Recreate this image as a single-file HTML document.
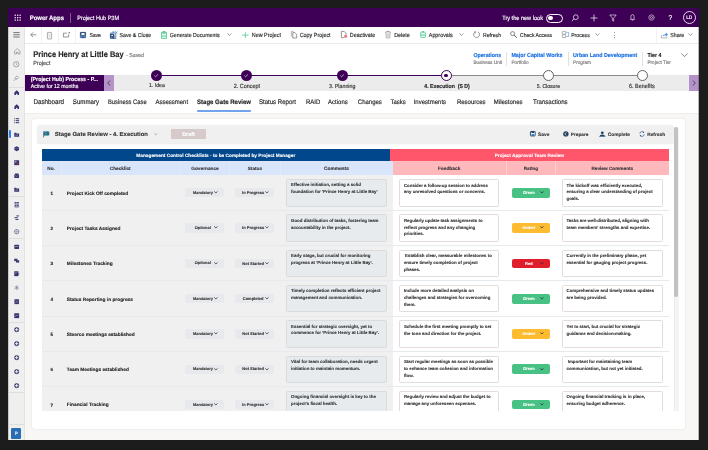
<!DOCTYPE html><html><head><meta charset="utf-8"><style>
html,body{margin:0;padding:0;}
body{filter:opacity(1);width:708px;height:450px;overflow:hidden;background:#1c1c1c;position:relative;font-family:"Liberation Sans",sans-serif;}
.r{position:absolute;box-sizing:border-box;}
svg.r{overflow:visible;}
.t{text-rendering:geometricPrecision;position:absolute;white-space:nowrap;transform-origin:0 0;}
</style></head><body>
<div class="r" style="left:8.00px;top:8.00px;width:691.00px;height:432.00px;background:#f8f7f6;"></div>
<div class="r" style="left:8.00px;top:8.00px;width:691.00px;height:19.00px;background:#3d0056;"></div>
<svg class="r" style="left:13.90px;top:14.10px;" width="7" height="7" viewBox="0 0 7 7"><rect x="0.60" y="0.60" width="1.25" height="1.25" fill="#fff"/><rect x="0.60" y="3.05" width="1.25" height="1.25" fill="#fff"/><rect x="0.60" y="5.50" width="1.25" height="1.25" fill="#fff"/><rect x="3.05" y="0.60" width="1.25" height="1.25" fill="#fff"/><rect x="3.05" y="3.05" width="1.25" height="1.25" fill="#fff"/><rect x="3.05" y="5.50" width="1.25" height="1.25" fill="#fff"/><rect x="5.50" y="0.60" width="1.25" height="1.25" fill="#fff"/><rect x="5.50" y="3.05" width="1.25" height="1.25" fill="#fff"/><rect x="5.50" y="5.50" width="1.25" height="1.25" fill="#fff"/></svg>
<div class="t" style="left:30px;top:15px;font-size:65.67px;line-height:65.67px;color:#fff;font-weight:bold;transform:translate(-0.300px,-0.159px) scale(0.09091,0.10000);-webkit-text-stroke:1.5px currentColor;">Power Apps</div>
<div class="r" style="left:70.30px;top:13.00px;width:0.50px;height:9.50px;background:rgba(255,255,255,0.35);"></div>
<div class="t" style="left:77px;top:15px;font-size:60.83px;line-height:60.83px;color:#fff;transform:translate(0.200px,0.251px) scale(0.09091,0.10000);-webkit-text-stroke:1.5px currentColor;">Project Hub P3M</div>
<div class="t" style="left:502px;top:15px;font-size:61.38px;line-height:61.38px;color:#fff;transform:translate(0.200px,0.004px) scale(0.09091,0.10000);-webkit-text-stroke:1.5px currentColor;">Try the new look</div>
<div class="r" style="left:546px;top:13.8px;width:16.8px;height:9.2px;border:0.8px solid #fff;border-radius:5px;"></div>
<div class="r" style="left:548.2px;top:15.6px;width:4.8px;height:4.8px;background:#fff;border-radius:50%;"></div>
<svg class="r" style="left:571.00px;top:13.50px;" width="8" height="8" viewBox="0 0 8 8"><circle cx="4.8" cy="3.2" r="2.4" fill="none" stroke="#fff" stroke-width="0.7"/><line x1="3.1" y1="4.9" x2="0.8" y2="7.2" stroke="#fff" stroke-width="0.7"/></svg>
<svg class="r" style="left:590.00px;top:13.50px;" width="8" height="8" viewBox="0 0 8 8"><line x1="4" y1="0.5" x2="4" y2="7.5" stroke="#fff" stroke-width="0.7"/><line x1="0.5" y1="4" x2="7.5" y2="4" stroke="#fff" stroke-width="0.7"/></svg>
<svg class="r" style="left:609.00px;top:13.50px;" width="8" height="8" viewBox="0 0 8 8"><path d="M0.8 1 L7.2 1 L4.6 4.2 L4.6 7.2 L3.4 6.4 L3.4 4.2 Z" fill="none" stroke="#fff" stroke-width="0.6"/></svg>
<svg class="r" style="left:629.50px;top:14.00px;" width="5" height="7" viewBox="0 0 5 7"><path d="M0.9 4.9 L0.9 2.6 Q0.9 0.6 2.5 0.6 Q4.1 0.6 4.1 2.6 L4.1 4.9 L4.6 5.4 L0.4 5.4 Z" fill="none" stroke="#fff" stroke-width="0.6"/><path d="M1.8 6.2 L3.2 6.2" stroke="#fff" stroke-width="0.6"/></svg>
<svg class="r" style="left:647.50px;top:14.00px;" width="7" height="7" viewBox="0 0 7 7"><circle cx="3.5" cy="3.5" r="2.6" fill="none" stroke="#fff" stroke-width="1.0" stroke-dasharray="0.9 0.45"/><circle cx="3.5" cy="3.5" r="1.0" fill="none" stroke="#fff" stroke-width="0.55"/></svg>
<div class="t" style="left:670px;top:14px;font-size:71.50px;line-height:71.50px;color:#fff;transform:translate(0.200px,0.248px) scale(0.09091,0.10000) translateX(-50%);-webkit-text-stroke:1.5px currentColor;">?</div>
<div class="r" style="left:682.5px;top:10.9px;width:13.2px;height:13.2px;border:0.6px solid rgba(255,255,255,0.85);border-radius:50%;"></div>
<div class="t" style="left:689px;top:15px;font-size:51.70px;line-height:51.70px;color:#fff;transform:translate(0.200px,0.124px) scale(0.09091,0.10000) translateX(-50%);-webkit-text-stroke:1.5px currentColor;">LD</div>
<div class="r" style="left:8.00px;top:27.00px;width:16.60px;height:413.00px;background:#efefef;"></div>
<div class="r" style="left:24.30px;top:27.00px;width:0.50px;height:413.00px;background:#e3e3e3;"></div>
<div class="r" style="left:8.00px;top:27.00px;width:0.80px;height:413.00px;background:#c9c9c9;"></div>
<div class="r" style="left:24.60px;top:27.00px;width:674.40px;height:16.00px;background:#ffffff;"></div>
<div class="r" style="left:24.60px;top:42.80px;width:674.40px;height:0.90px;background:#e9e9e9;"></div>
<div class="r" style="left:41.20px;top:27.00px;width:0.60px;height:15.60px;background:#f0f0f0;"></div>
<div class="r" style="left:58.20px;top:27.00px;width:0.60px;height:15.60px;background:#f0f0f0;"></div>
<div class="r" style="left:75.10px;top:27.00px;width:0.60px;height:15.60px;background:#f0f0f0;"></div>
<div class="r" style="left:656.20px;top:27.00px;width:1.20px;height:15.60px;background:#f2f2f2;"></div>
<div class="r" style="left:24.60px;top:43.70px;width:674.40px;height:30.90px;background:#ffffff;"></div>
<div class="r" style="left:24.60px;top:74.60px;width:674.40px;height:16.40px;background:#ececec;"></div>
<div class="r" style="left:24.60px;top:91.00px;width:674.40px;height:22.00px;background:#ffffff;"></div>
<svg class="r" style="left:30.00px;top:32.30px;" width="6.5" height="5.6" viewBox="0 0 6.5 5.6"><path d="M6.3 2.8 L0.7 2.8 M3.1 0.4 L0.7 2.8 L3.1 5.2" fill="none" stroke="#605e5c" stroke-width="0.65"/></svg>
<svg class="r" style="left:47.20px;top:31.50px;" width="5" height="7.4" viewBox="0 0 5 7.4"><rect x="0.4" y="0.4" width="4.2" height="6.6" rx="0.7" fill="#fafafa" stroke="#8a8886" stroke-width="0.7"/><rect x="1.6" y="1.6" width="1.8" height="3.8" fill="#e0e0e0"/></svg>
<svg class="r" style="left:63.00px;top:32.20px;" width="7" height="5.4" viewBox="0 0 7 5.4"><path d="M0.4 1.2 L0.4 5 L5.6 5 L5.6 2.4 M0.4 1.2 L4 1.2" fill="none" stroke="#605e5c" stroke-width="0.65"/><circle cx="6.2" cy="0.8" r="0.75" fill="#605e5c"/></svg>
<svg class="r" style="left:80.00px;top:31.80px;" width="6" height="6.1" viewBox="0 0 6 6.1"><rect x="0.35" y="0.35" width="5.3" height="5.3999999999999995" rx="0.4" fill="#4a8fd6" stroke="#34466a" stroke-width="0.7"/><rect x="0.35" y="0.35" width="5.3" height="3.05" fill="#34466a"/><rect x="1.4" y="1.1" width="3.2" height="1.8499999999999999" fill="#fff"/><rect x="2.2" y="4.3999999999999995" width="1.6" height="1.3" fill="#34466a"/></svg>
<div class="t" style="left:89px;top:32px;font-size:55.55px;line-height:55.55px;color:#2a2a2a;transform:translate(0.400px,0.498px) scale(0.09091,0.10000);-webkit-text-stroke:1.5px currentColor;">Save</div>
<svg class="r" style="left:109.50px;top:30.80px;" width="8" height="8" viewBox="0 0 8 8"><path d="M0.5 2 L4.8 2 L5.8 3 L5.8 7.5 L0.5 7.5 Z" fill="none" stroke="#2b579a" stroke-width="0.7"/><rect x="1.5" y="5" width="3" height="2.5" fill="#2b579a" opacity="0.6"/><path d="M5.3 0.4 L7.4 2.5 M7.4 0.4 L5.3 2.5" stroke="#2b579a" stroke-width="0.55"/></svg>
<svg class="r" style="left:110.00px;top:33.90px;" width="4.4" height="4.2" viewBox="0 0 4.4 4.2"><rect x="0.35" y="0.35" width="3.7" height="3.5" rx="0.4" fill="#4a8fd6" stroke="#34466a" stroke-width="0.7"/><rect x="0.35" y="0.35" width="3.7" height="2.1" fill="#34466a"/><rect x="1.4" y="1.1" width="1.6000000000000005" height="0.9000000000000001" fill="#fff"/><rect x="2.2" y="2.5" width="1.6" height="1.3" fill="#34466a"/></svg>
<svg class="r" style="left:110.80px;top:31.20px;" width="5.6" height="3.6" viewBox="0 0 5.6 3.6"><path d="M0.5 2.9 L2.6 0.8 M1.4 0.7 L2.7 0.7 L2.7 2" fill="none" stroke="#3b86d6" stroke-width="0.7"/><path d="M3.6 1.2 L5.2 1.2 L5.2 2.9" fill="none" stroke="#9a9a9a" stroke-width="0.55"/></svg>
<div class="t" style="left:120px;top:32px;font-size:57.53px;line-height:57.53px;color:#2a2a2a;transform:translate(-0.500px,0.330px) scale(0.09091,0.10000);-webkit-text-stroke:1.5px currentColor;">Save &amp; Close</div>
<svg class="r" style="left:160.50px;top:31.00px;" width="6" height="8" viewBox="0 0 6 8"><rect x="0.5" y="1.2" width="5" height="6.3" rx="0.4" fill="none" stroke="#3aa76d" stroke-width="0.7"/><rect x="1.8" y="0.4" width="2.4" height="1.4" fill="#3aa76d"/><path d="M1.7 4.5 L4.3 4.5 M3 3.2 L3 5.8" stroke="#3aa76d" stroke-width="0.5"/></svg>
<svg class="r" style="left:161.00px;top:31.60px;" width="6" height="6.8" viewBox="0 0 6 6.8"><rect x="0.55" y="1.15" width="4.9" height="5.3" rx="0.7" fill="#fff" stroke="#5fd19b" stroke-width="0.9"/><rect x="1.9" y="0.1" width="2.2" height="1.5" rx="0.4" fill="#5fd19b"/><rect x="1.5" y="2.7" width="0.9" height="2.7" fill="#5fd19b"/><rect x="3.6" y="2.7" width="0.9" height="2.7" fill="#5fd19b"/><rect x="1.5" y="3.65" width="3" height="0.8" fill="#5fd19b" opacity="0.7"/></svg>
<div class="t" style="left:170px;top:32px;font-size:57.53px;line-height:57.53px;color:#2a2a2a;transform:translate(-0.200px,0.330px) scale(0.09091,0.10000);-webkit-text-stroke:1.5px currentColor;">Generate Documents</div>
<svg class="r" style="left:227.30px;top:33.10px;" width="4.8" height="3.4" viewBox="0 0 4.8 3.4"><path d="M0.3 0.5 L2.4 2.4 L4.5 0.5" fill="none" stroke="#605e5c" stroke-width="0.6"/></svg>
<svg class="r" style="left:242.20px;top:31.80px;" width="6.8" height="6.2" viewBox="0 0 6.8 6.2"><path d="M3.4 0.2 L3.4 6 M0.2 3.1 L6.6 3.1" stroke="#5fd19b" stroke-width="0.9"/></svg>
<div class="t" style="left:252px;top:32px;font-size:59.84px;line-height:59.84px;color:#2a2a2a;transform:translate(-0.300px,0.135px) scale(0.09091,0.10000);-webkit-text-stroke:1.5px currentColor;">New Project</div>
<svg class="r" style="left:291.00px;top:31.00px;" width="6.2" height="7.4" viewBox="0 0 6.2 7.4"><path d="M0.4 5.6 L0.4 0.4 L2.6 0.4" fill="none" stroke="#8a8886" stroke-width="0.6"/><path d="M1.8 1.6 L3.9 1.6 L5.7 3.4 L5.7 7 L1.8 7 Z" fill="#fff" stroke="#605e5c" stroke-width="0.65"/></svg>
<div class="t" style="left:300px;top:32px;font-size:59.40px;line-height:59.40px;color:#2a2a2a;transform:translate(-0.300px,0.172px) scale(0.09091,0.10000);-webkit-text-stroke:1.5px currentColor;">Copy Project</div>
<svg class="r" style="left:340.80px;top:31.20px;" width="6.4" height="7" viewBox="0 0 6.4 7"><path d="M3.4 6.6 L0.4 6.6 L0.4 0.4 L3.2 0.4 L5 2.2 L5 3.8" fill="none" stroke="#605e5c" stroke-width="0.65"/><circle cx="4.7" cy="5.3" r="1.55" fill="#f0727f"/></svg>
<div class="t" style="left:350px;top:32px;font-size:59.40px;line-height:59.40px;color:#2a2a2a;transform:translate(-0.200px,0.172px) scale(0.09091,0.10000);-webkit-text-stroke:1.5px currentColor;">Deactivate</div>
<svg class="r" style="left:385.00px;top:31.10px;" width="6" height="7.2" viewBox="0 0 6 7.2"><path d="M0.3 1.2 L5.7 1.2" stroke="#605e5c" stroke-width="0.7"/><path d="M2.2 1.2 L2.2 0.3 L3.8 0.3 L3.8 1.2" fill="none" stroke="#605e5c" stroke-width="0.5"/><path d="M0.9 1.2 L1.2 6.9 L4.8 6.9 L5.1 1.2" fill="#f3f3f3" stroke="#8a8886" stroke-width="0.6"/><path d="M2.3 2.6 L2.3 5.6 M3.7 2.6 L3.7 5.6" stroke="#9a9a9a" stroke-width="0.45"/></svg>
<div class="t" style="left:394px;top:32px;font-size:58.96px;line-height:58.96px;color:#2a2a2a;transform:translate(0.200px,0.209px) scale(0.09091,0.10000);-webkit-text-stroke:1.5px currentColor;">Delete</div>
<svg class="r" style="left:419.80px;top:31.40px;" width="6" height="6.8" viewBox="0 0 6 6.8"><rect x="0.55" y="1.15" width="4.9" height="5.3" rx="0.7" fill="#fff" stroke="#5fd19b" stroke-width="0.9"/><rect x="1.9" y="0.1" width="2.2" height="1.5" rx="0.4" fill="#5fd19b"/><rect x="1.5" y="2.7" width="0.9" height="2.7" fill="#5fd19b"/><rect x="3.6" y="2.7" width="0.9" height="2.7" fill="#5fd19b"/><rect x="1.5" y="3.65" width="3" height="0.8" fill="#5fd19b" opacity="0.7"/></svg>
<div class="t" style="left:429px;top:32px;font-size:59.07px;line-height:59.07px;color:#2a2a2a;transform:translate(-0.200px,0.200px) scale(0.09091,0.10000);-webkit-text-stroke:1.5px currentColor;">Approvals</div>
<svg class="r" style="left:458.80px;top:33.10px;" width="4.8" height="3.4" viewBox="0 0 4.8 3.4"><path d="M0.3 0.5 L2.4 2.4 L4.5 0.5" fill="none" stroke="#605e5c" stroke-width="0.6"/></svg>
<svg class="r" style="left:473.20px;top:31.40px;" width="7.2" height="6.8" viewBox="0 0 7.2 6.8"><path d="M2.4 0.9 A2.95 2.95 0 1 0 4.8 0.9" fill="none" stroke="#605e5c" stroke-width="0.65"/><path d="M1.2 0.5 L2.6 0.9 L2.2 2.2" fill="none" stroke="#605e5c" stroke-width="0.55"/></svg>
<div class="t" style="left:483px;top:32px;font-size:56.54px;line-height:56.54px;color:#2a2a2a;transform:translate(0.000px,0.414px) scale(0.09091,0.10000);-webkit-text-stroke:1.5px currentColor;">Refresh</div>
<svg class="r" style="left:510.20px;top:30.90px;" width="7.4" height="7.5" viewBox="0 0 7.4 7.5"><circle cx="2.6" cy="2.6" r="2.0" fill="none" stroke="#605e5c" stroke-width="0.75"/><path d="M4 4 L6.9 6.9" stroke="#605e5c" stroke-width="0.9"/></svg>
<div class="t" style="left:520px;top:32px;font-size:56.10px;line-height:56.10px;color:#2a2a2a;transform:translate(0.000px,0.451px) scale(0.09091,0.10000);-webkit-text-stroke:1.5px currentColor;">Check Access</div>
<svg class="r" style="left:562.00px;top:31.10px;" width="7.2" height="6.9" viewBox="0 0 7.2 6.9"><rect x="0.35" y="0.35" width="3.4" height="2.9" rx="0.5" fill="none" stroke="#8a8886" stroke-width="0.65"/><rect x="0.35" y="3.65" width="3.4" height="2.9" rx="0.5" fill="none" stroke="#8a8886" stroke-width="0.65"/><path d="M4.3 1.3 L6.6 1.3 L6.6 5.6 L4.3 5.6" fill="none" stroke="#5b9be6" stroke-width="0.7"/></svg>
<div class="t" style="left:571px;top:32px;font-size:56.32px;line-height:56.32px;color:#2a2a2a;transform:translate(0.200px,0.433px) scale(0.09091,0.10000);-webkit-text-stroke:1.5px currentColor;">Process</div>
<svg class="r" style="left:595.40px;top:33.10px;" width="4.8" height="3.4" viewBox="0 0 4.8 3.4"><path d="M0.3 0.5 L2.4 2.4 L4.5 0.5" fill="none" stroke="#605e5c" stroke-width="0.6"/></svg>
<div class="r" style="left:613.90px;top:32.40px;width:0.90px;height:0.90px;background:#605e5c;border-radius:50%;"></div>
<div class="r" style="left:613.90px;top:34.60px;width:0.90px;height:0.90px;background:#605e5c;border-radius:50%;"></div>
<div class="r" style="left:613.90px;top:36.80px;width:0.90px;height:0.90px;background:#605e5c;border-radius:50%;"></div>
<svg class="r" style="left:661.00px;top:31.60px;" width="7.2" height="6.4" viewBox="0 0 7.2 6.4"><path d="M0.4 3 L0.4 5.9 L6 5.9 L6 4.6" fill="none" stroke="#8a8886" stroke-width="0.6"/><path d="M1.6 4.6 Q2 2.2 4.8 2.2 L4.8 0.6 L7 2.6 L4.8 4.6 L4.8 3.2 Q3 3.2 1.6 4.6 Z" fill="#3b86e6"/></svg>
<div class="t" style="left:670px;top:32px;font-size:58.08px;line-height:58.08px;color:#2a2a2a;transform:translate(0.200px,0.284px) scale(0.09091,0.10000);-webkit-text-stroke:1.5px currentColor;">Share</div>
<svg class="r" style="left:687.60px;top:33.10px;" width="4.8" height="3.4" viewBox="0 0 4.8 3.4"><path d="M0.3 0.5 L2.4 2.4 L4.5 0.5" fill="none" stroke="#605e5c" stroke-width="0.6"/></svg>
<div class="t" style="left:33px;top:50px;font-size:81.95px;line-height:81.95px;color:#242424;font-weight:bold;transform:translate(0.300px,0.263px) scale(0.09091,0.10000);-webkit-text-stroke:1.5px currentColor;">Prince Henry at Little Bay</div>
<div class="t" style="left:126px;top:52px;font-size:56.76px;line-height:56.76px;color:#707070;transform:translate(0.200px,0.195px) scale(0.09091,0.10000);-webkit-text-stroke:1.5px currentColor;">- Saved</div>
<div class="t" style="left:33px;top:60px;font-size:60.06px;line-height:60.06px;color:#424242;transform:translate(0.300px,0.216px) scale(0.09091,0.10000);-webkit-text-stroke:1.5px currentColor;">Project</div>
<div class="t" style="left:473px;top:52px;font-size:57.75px;line-height:57.75px;color:#1a6fe0;font-weight:bold;transform:translate(0.400px,0.011px) scale(0.09091,0.10000);-webkit-text-stroke:1.5px currentColor;">Operations</div>
<div class="t" style="left:473px;top:59px;font-size:51.70px;line-height:51.70px;color:#777;transform:translate(0.400px,0.424px) scale(0.09091,0.10000);-webkit-text-stroke:1.5px currentColor;">Business Unit</div>
<div class="r" style="left:506.30px;top:52.00px;width:0.50px;height:13.80px;background:#e1e1e1;"></div>
<div class="t" style="left:511px;top:52px;font-size:58.52px;line-height:58.52px;color:#1a6fe0;font-weight:bold;transform:translate(0.400px,-0.054px) scale(0.09091,0.10000);-webkit-text-stroke:1.5px currentColor;">Major Capital Works</div>
<div class="t" style="left:511px;top:59px;font-size:51.70px;line-height:51.70px;color:#777;transform:translate(0.400px,0.424px) scale(0.09091,0.10000);-webkit-text-stroke:1.5px currentColor;">Portfolio</div>
<div class="r" style="left:567.60px;top:52.00px;width:0.50px;height:13.80px;background:#e1e1e1;"></div>
<div class="t" style="left:573px;top:52px;font-size:58.30px;line-height:58.30px;color:#1a6fe0;font-weight:bold;transform:translate(0.000px,-0.035px) scale(0.09091,0.10000);-webkit-text-stroke:1.5px currentColor;">Urban Land Development</div>
<div class="t" style="left:573px;top:59px;font-size:51.70px;line-height:51.70px;color:#777;transform:translate(0.000px,0.424px) scale(0.09091,0.10000);-webkit-text-stroke:1.5px currentColor;">Program</div>
<div class="r" style="left:642.10px;top:52.00px;width:0.50px;height:13.80px;background:#e1e1e1;"></div>
<div class="t" style="left:648px;top:52px;font-size:57.31px;line-height:57.31px;color:#242424;font-weight:bold;transform:translate(-0.500px,0.049px) scale(0.09091,0.10000);-webkit-text-stroke:1.5px currentColor;">Tier 4</div>
<div class="t" style="left:648px;top:60px;font-size:50.71px;line-height:50.71px;color:#777;transform:translate(-0.500px,-0.493px) scale(0.09091,0.10000);-webkit-text-stroke:1.5px currentColor;">Project Tier</div>
<svg class="r" style="left:680.70px;top:52.75px;" width="7" height="4.5" viewBox="0 0 7 4.5"><path d="M0.3 0.5 L3.5 3.5 L6.7 0.5" fill="none" stroke="#424242" stroke-width="0.6"/></svg>
<div class="r" style="left:25.00px;top:74.60px;width:79.30px;height:16.40px;background:#3d0056;"></div>
<div class="r" style="left:104.30px;top:74.60px;width:9.50px;height:16.40px;background:#b592c9;"></div>
<svg class="r" style="left:106.80px;top:79.80px;" width="4" height="6" viewBox="0 0 4 6"><path d="M3 0.5 L0.8 3 L3 5.5" fill="none" stroke="#333" stroke-width="0.8"/></svg>
<div class="t" style="left:31px;top:76px;font-size:58.19px;line-height:58.19px;color:#fff;font-weight:bold;transform:translate(-0.200px,-0.126px) scale(0.09091,0.10000);-webkit-text-stroke:1.5px currentColor;">(Project Hub) Process - P...</div>
<div class="t" style="left:31px;top:83px;font-size:57.31px;line-height:57.31px;color:#fff;transform:translate(-0.200px,0.149px) scale(0.09091,0.10000);-webkit-text-stroke:1.5px currentColor;">Active for 12 months</div>
<div class="r" style="left:689.20px;top:75.00px;width:9.80px;height:16.00px;background:#b592c9;"></div>
<svg class="r" style="left:692.20px;top:79.80px;" width="4" height="6" viewBox="0 0 4 6"><path d="M1 0.5 L3.2 3 L1 5.5" fill="none" stroke="#333" stroke-width="0.8"/></svg>
<div class="r" style="left:156.50px;top:74.90px;width:289.60px;height:1.10px;background:#3d0056;"></div>
<div class="r" style="left:446.10px;top:75.00px;width:195.90px;height:0.90px;background:#8a8886;"></div>
<div class="r" style="left:150.95px;top:69.9px;width:11.1px;height:11.1px;border-radius:50%;background:#3d0056;"></div>
<svg class="r" style="left:154.30px;top:73.80px;" width="4.4" height="3.2" viewBox="0 0 4.4 3.2"><path d="M0.4 1.6 L1.6 2.7 L4 0.4" fill="none" stroke="#fff" stroke-width="0.6"/></svg>
<div class="r" style="left:240.85px;top:69.9px;width:11.1px;height:11.1px;border-radius:50%;background:#3d0056;"></div>
<svg class="r" style="left:244.20px;top:73.80px;" width="4.4" height="3.2" viewBox="0 0 4.4 3.2"><path d="M0.4 1.6 L1.6 2.7 L4 0.4" fill="none" stroke="#fff" stroke-width="0.6"/></svg>
<div class="r" style="left:336.85px;top:69.9px;width:11.1px;height:11.1px;border-radius:50%;background:#3d0056;"></div>
<svg class="r" style="left:340.20px;top:73.80px;" width="4.4" height="3.2" viewBox="0 0 4.4 3.2"><path d="M0.4 1.6 L1.6 2.7 L4 0.4" fill="none" stroke="#fff" stroke-width="0.6"/></svg>
<div class="r" style="left:440.80px;top:70.15px;width:11px;height:11px;border-radius:50%;background:#fff;border:1.35px solid #3d0056;"></div>
<div class="r" style="left:444.20px;top:73.55px;width:3.8px;height:3.8px;border-radius:50%;background:#3d0056;"></div>
<div class="r" style="left:543.10px;top:70.05px;width:11px;height:11px;border-radius:50%;background:#fff;border:1.35px solid #636261;"></div>
<div class="r" style="left:636.60px;top:70.05px;width:11px;height:11px;border-radius:50%;background:#fff;border:1.35px solid #636261;"></div>
<div class="t" style="left:149px;top:83px;font-size:56.87px;line-height:56.87px;color:#323130;transform:translate(0.000px,-0.114px) scale(0.09091,0.10000);-webkit-text-stroke:1.5px currentColor;">1. Idea</div>
<div class="t" style="left:234px;top:83px;font-size:59.84px;line-height:59.84px;color:#323130;transform:translate(-0.300px,-0.365px) scale(0.09091,0.10000);-webkit-text-stroke:1.5px currentColor;">2. Concept</div>
<div class="t" style="left:329px;top:83px;font-size:57.86px;line-height:57.86px;color:#323130;transform:translate(0.000px,-0.198px) scale(0.09091,0.10000);-webkit-text-stroke:1.5px currentColor;">3. Planning</div>
<div class="t" style="left:424px;top:83px;font-size:56.98px;line-height:56.98px;color:#242424;font-weight:bold;transform:translate(0.300px,-0.123px) scale(0.09091,0.10000);-webkit-text-stroke:1.5px currentColor;">4. Execution&nbsp; (S D)</div>
<div class="t" style="left:537px;top:83px;font-size:56.21px;line-height:56.21px;color:#323130;transform:translate(-0.300px,-0.058px) scale(0.09091,0.10000);-webkit-text-stroke:1.5px currentColor;">5. Closure</div>
<div class="t" style="left:629px;top:83px;font-size:59.84px;line-height:59.84px;color:#323130;transform:translate(0.000px,-0.365px) scale(0.09091,0.10000);-webkit-text-stroke:1.5px currentColor;">6. Benefits</div>
<div class="t" style="left:34px;top:98px;font-size:68.75px;line-height:68.75px;color:#222222;transform:translate(-0.500px,0.480px) scale(0.09091,0.10000);-webkit-text-stroke:1.5px currentColor;">Dashboard</div>
<div class="t" style="left:73px;top:99px;font-size:67.65px;line-height:67.65px;color:#222222;transform:translate(-0.200px,-0.427px) scale(0.09091,0.10000);-webkit-text-stroke:1.5px currentColor;">Summary</div>
<div class="t" style="left:108px;top:99px;font-size:63.69px;line-height:63.69px;color:#222222;transform:translate(0.000px,-0.091px) scale(0.09091,0.10000);-webkit-text-stroke:1.5px currentColor;">Business Case</div>
<div class="t" style="left:156px;top:99px;font-size:65.89px;line-height:65.89px;color:#222222;transform:translate(-0.500px,-0.278px) scale(0.09091,0.10000);-webkit-text-stroke:1.5px currentColor;">Assessment</div>
<div class="t" style="left:259px;top:99px;font-size:66.88px;line-height:66.88px;color:#222222;transform:translate(-0.100px,-0.361px) scale(0.09091,0.10000);-webkit-text-stroke:1.5px currentColor;">Status Report</div>
<div class="t" style="left:306px;top:99px;font-size:66.00px;line-height:66.00px;color:#222222;transform:translate(0.000px,-0.287px) scale(0.09091,0.10000);-webkit-text-stroke:1.5px currentColor;">RAID</div>
<div class="t" style="left:328px;top:99px;font-size:66.00px;line-height:66.00px;color:#222222;transform:translate(0.100px,-0.287px) scale(0.09091,0.10000);-webkit-text-stroke:1.5px currentColor;">Actions</div>
<div class="t" style="left:358px;top:99px;font-size:66.00px;line-height:66.00px;color:#222222;transform:translate(-0.200px,-0.287px) scale(0.09091,0.10000);-webkit-text-stroke:1.5px currentColor;">Changes</div>
<div class="t" style="left:390px;top:99px;font-size:66.00px;line-height:66.00px;color:#222222;transform:translate(0.400px,-0.287px) scale(0.09091,0.10000);-webkit-text-stroke:1.5px currentColor;">Tasks</div>
<div class="t" style="left:414px;top:99px;font-size:66.00px;line-height:66.00px;color:#222222;transform:translate(-0.300px,-0.287px) scale(0.09091,0.10000);-webkit-text-stroke:1.5px currentColor;">Investments</div>
<div class="t" style="left:457px;top:99px;font-size:66.00px;line-height:66.00px;color:#222222;transform:translate(-0.100px,-0.287px) scale(0.09091,0.10000);-webkit-text-stroke:1.5px currentColor;">Resources</div>
<div class="t" style="left:494px;top:99px;font-size:66.00px;line-height:66.00px;color:#222222;transform:translate(-0.200px,-0.287px) scale(0.09091,0.10000);-webkit-text-stroke:1.5px currentColor;">Milestones</div>
<div class="t" style="left:533px;top:99px;font-size:66.88px;line-height:66.88px;color:#222222;transform:translate(0.000px,-0.361px) scale(0.09091,0.10000);-webkit-text-stroke:1.5px currentColor;">Transactions</div>
<div class="t" style="left:197px;top:99px;font-size:66.33px;line-height:66.33px;color:#242424;font-weight:bold;transform:translate(0.000px,-0.315px) scale(0.09091,0.10000);-webkit-text-stroke:1.5px currentColor;">Stage Gate Review</div>
<div class="r" style="left:197.00px;top:110.30px;width:54.00px;height:1.50px;background:#74a3ee;border-radius:0.7px;"></div>
<div class="r" style="left:24.60px;top:112.80px;width:674.40px;height:0.60px;background:#ededed;"></div>
<div class="r" style="left:698.20px;top:27.00px;width:0.80px;height:413.00px;background:rgba(60,60,60,0.35);"></div>
<div class="r" style="left:31.6px;top:118.7px;width:653.6px;height:310.3px;background:#fff;border-radius:2px;box-shadow:0 0 1.5px rgba(0,0,0,0.18);"></div>
<div class="r" style="left:38.1px;top:125.2px;width:634.5px;height:17.5px;background:#f0f0f0;box-shadow:0 1.2px 2.2px rgba(0,0,0,0.16);"></div>
<svg class="r" style="left:43.00px;top:131.00px;" width="6.4" height="6.4" viewBox="0 0 6.4 6.4"><path d="M0.6 0.3 L0.6 6.3" stroke="#4a6a9a" stroke-width="0.9"/><rect x="1" y="0.5" width="5.2" height="3.9" fill="#2a5aa8"/><rect x="1" y="0.5" width="1.3" height="1.3" fill="#5a8fd8"/><rect x="2.3" y="1.8" width="1.3" height="1.3" fill="#1e8a50"/><rect x="3.6" y="0.5" width="1.3" height="1.3" fill="#1e8a50"/><rect x="4.9" y="1.8" width="1.3" height="1.3" fill="#1e8a50"/><rect x="1" y="3.1" width="1.3" height="1.3" fill="#1e8a50"/><rect x="3.6" y="3.1" width="1.3" height="1.3" fill="#1e8a50"/><rect x="2.3" y="1.9" width="1.2" height="1.0" fill="#9cc0f0" opacity="0.7"/></svg>
<div class="t" style="left:55px;top:131px;font-size:59.30px;line-height:59.30px;color:#333;font-weight:bold;transform:translate(-0.300px,0.280px) scale(0.10000,0.10000);-webkit-text-stroke:1.0px currentColor;">Stage Gate Review - 4. Execution</div>
<svg class="r" style="left:154.00px;top:132.80px;" width="3.6" height="2.8" viewBox="0 0 3.6 2.8"><path d="M0.3 0.5 L1.8 1.8 L3.3000000000000003 0.5" fill="none" stroke="#777" stroke-width="0.5"/></svg>
<div class="r" style="left:171.1px;top:129px;width:35px;height:10px;background:#d6caca;"></div>
<div class="t" style="left:188px;top:132px;font-size:54.00px;line-height:54.00px;color:#fff;font-weight:bold;transform:translate(0.500px,-0.471px) scale(0.10000,0.10000) translateX(-50%);-webkit-text-stroke:1.0px currentColor;">Draft</div>
<svg class="r" style="left:530.30px;top:131.10px;" width="5.6" height="5.4" viewBox="0 0 5.6 5.4"><rect x="0.45" y="0.45" width="4.7" height="4.5" rx="0.4" fill="#fff" stroke="#1d3f66" stroke-width="0.9"/><rect x="1.4" y="0.45" width="2.8" height="1.6" fill="#1d3f66"/><rect x="1.5" y="3.1" width="2.6" height="1.8" fill="#2f6fc0"/></svg>
<div class="t" style="left:538px;top:132px;font-size:48.80px;line-height:48.80px;color:#333;font-weight:bold;transform:translate(0.000px,-0.331px) scale(0.10000,0.10000);-webkit-text-stroke:1.0px currentColor;">Save</div>
<svg class="r" style="left:562.80px;top:131.40px;" width="5.8" height="5.8" viewBox="0 0 5.8 5.8"><circle cx="2.9" cy="2.9" r="2.7" fill="#24435f"/><path d="M3.3 1.4 L1.9 2.9 L3.3 4.4" fill="none" stroke="#fff" stroke-width="0.7"/></svg>
<div class="t" style="left:571px;top:132px;font-size:47.50px;line-height:47.50px;color:#333;font-weight:bold;transform:translate(-0.200px,-0.221px) scale(0.10000,0.10000);-webkit-text-stroke:1.0px currentColor;">Prepare</div>
<svg class="r" style="left:599.00px;top:131.30px;" width="6.6" height="6" viewBox="0 0 6.6 6"><circle cx="3.3" cy="1.8" r="1.4" fill="#24435f"/><path d="M0.4 5.6 Q0.6 3.4 3.3 3.4 Q6 3.4 6.2 5.6 Z" fill="#24435f"/><rect x="0.2" y="5.1" width="6.2" height="0.7" fill="#4a7aa8"/></svg>
<div class="t" style="left:608px;top:132px;font-size:48.90px;line-height:48.90px;color:#333;font-weight:bold;transform:translate(-0.300px,-0.339px) scale(0.10000,0.10000);-webkit-text-stroke:1.0px currentColor;">Complete</div>
<svg class="r" style="left:639.00px;top:131.20px;" width="6" height="6" viewBox="0 0 6 6"><path d="M5 1.6 A2.3 2.3 0 0 0 0.8 2.6 M1 4.4 A2.3 2.3 0 0 0 5.2 3.4" fill="none" stroke="#2d5d94" stroke-width="0.75"/><path d="M4.4 0.4 L5.4 1.9 L3.8 2.1 Z M1.6 5.6 L0.6 4.1 L2.2 3.9 Z" fill="#2d5d94"/></svg>
<div class="t" style="left:647px;top:132px;font-size:48.10px;line-height:48.10px;color:#333;font-weight:bold;transform:translate(0.200px,-0.272px) scale(0.10000,0.10000);-webkit-text-stroke:1.0px currentColor;">Refresh</div>
<div class="r" style="left:673.60px;top:126.60px;width:5.00px;height:284.10px;background:#f4f4f4;border-left:0.4px solid #ececec;"></div>
<div class="r" style="left:674.40px;top:126.60px;width:3.60px;height:170.10px;background:#c2c2c2;border-radius:1.8px;"></div>
<div class="r" style="left:41.90px;top:149.20px;width:347.80px;height:12.20px;background:#00478c;"></div>
<div class="r" style="left:389.70px;top:149.20px;width:279.00px;height:12.10px;background:#ff566b;"></div>
<div class="r" style="left:41.90px;top:161.40px;width:350.90px;height:13.60px;background:#d9e5fb;"></div>
<div class="r" style="left:392.80px;top:161.30px;width:275.90px;height:13.70px;background:#ffb8bc;"></div>
<div class="r" style="left:61.10px;top:161.40px;width:0.60px;height:13.60px;background:rgba(255,255,255,0.2);"></div>
<div class="r" style="left:179.30px;top:161.40px;width:0.60px;height:13.60px;background:rgba(255,255,255,0.2);"></div>
<div class="r" style="left:228.90px;top:161.40px;width:0.60px;height:13.60px;background:rgba(255,255,255,0.2);"></div>
<div class="r" style="left:280.20px;top:161.40px;width:0.60px;height:13.60px;background:rgba(255,255,255,0.2);"></div>
<div class="r" style="left:505.50px;top:161.30px;width:0.60px;height:13.70px;background:rgba(255,255,255,0.35);"></div>
<div class="r" style="left:555.30px;top:161.30px;width:0.60px;height:13.70px;background:rgba(255,255,255,0.35);"></div>
<div class="t" style="left:216px;top:153px;font-size:47.50px;line-height:47.50px;color:#fff;font-weight:bold;transform:translate(-0.200px,0.079px) scale(0.10000,0.10000) translateX(-50%);-webkit-text-stroke:1.0px currentColor;">Management Control Checklists - to be Completed by Project Manager</div>
<div class="t" style="left:529px;top:153px;font-size:47.80px;line-height:47.80px;color:#fff;font-weight:bold;transform:translate(0.300px,0.054px) scale(0.10000,0.10000) translateX(-50%);-webkit-text-stroke:1.0px currentColor;">Project Approval Team Review</div>
<div class="t" style="left:47px;top:166px;font-size:46.60px;line-height:46.60px;color:#333;font-weight:bold;transform:translate(0.300px,0.055px) scale(0.10000,0.10000);-webkit-text-stroke:1.0px currentColor;">No.</div>
<div class="t" style="left:120px;top:166px;font-size:47.00px;line-height:47.00px;color:#333;font-weight:bold;transform:translate(0.200px,0.021px) scale(0.10000,0.10000) translateX(-50%);-webkit-text-stroke:1.0px currentColor;">Checklist</div>
<div class="t" style="left:205px;top:166px;font-size:47.60px;line-height:47.60px;color:#333;font-weight:bold;transform:translate(0.000px,-0.029px) scale(0.10000,0.10000) translateX(-50%);-webkit-text-stroke:1.0px currentColor;">Governance</div>
<div class="t" style="left:255px;top:166px;font-size:47.10px;line-height:47.10px;color:#333;font-weight:bold;transform:translate(-0.100px,0.013px) scale(0.10000,0.10000) translateX(-50%);-webkit-text-stroke:1.0px currentColor;">Status</div>
<div class="t" style="left:336px;top:166px;font-size:48.00px;line-height:48.00px;color:#333;font-weight:bold;transform:translate(0.400px,-0.063px) scale(0.10000,0.10000) translateX(-50%);-webkit-text-stroke:1.0px currentColor;">Comments</div>
<div class="t" style="left:449px;top:166px;font-size:48.30px;line-height:48.30px;color:#333;font-weight:bold;transform:translate(0.200px,-0.089px) scale(0.10000,0.10000) translateX(-50%);-webkit-text-stroke:1.0px currentColor;">Feedback</div>
<div class="t" style="left:531px;top:166px;font-size:45.60px;line-height:45.60px;color:#333;font-weight:bold;transform:translate(-0.100px,0.140px) scale(0.10000,0.10000) translateX(-50%);-webkit-text-stroke:1.0px currentColor;">Rating</div>
<div class="t" style="left:612px;top:166px;font-size:47.00px;line-height:47.00px;color:#333;font-weight:bold;transform:translate(0.300px,0.021px) scale(0.10000,0.10000) translateX(-50%);-webkit-text-stroke:1.0px currentColor;">Review Comments</div>
<div class="r" style="left:0;top:175px;width:708px;height:235.6px;overflow:hidden;">
<div class="r" style="left:41.90px;top:0.00px;width:350.90px;height:240.00px;background:#f0f0f0;"></div>
<div class="r" style="left:41.90px;top:34.85px;width:626.80px;height:0.80px;background:#e6eaee;"></div>
<div class="r" style="left:41.90px;top:70.15px;width:626.80px;height:0.80px;background:#e6eaee;"></div>
<div class="r" style="left:41.90px;top:105.45px;width:626.80px;height:0.80px;background:#e6eaee;"></div>
<div class="r" style="left:41.90px;top:140.75px;width:626.80px;height:0.80px;background:#e6eaee;"></div>
<div class="r" style="left:41.90px;top:176.05px;width:626.80px;height:0.80px;background:#e6eaee;"></div>
<div class="r" style="left:41.90px;top:211.35px;width:626.80px;height:0.80px;background:#e6eaee;"></div>
<div class="r" style="left:41.90px;top:246.65px;width:626.80px;height:0.80px;background:#e6eaee;"></div>
<div class="t" style="left:50px;top:16px;font-size:46.00px;line-height:46.00px;color:#222;font-weight:bold;transform:translate(0.400px,-0.094px) scale(0.10000,0.10000);-webkit-text-stroke:1.0px currentColor;">1</div>
<div class="t" style="left:67px;top:16px;font-size:48.00px;line-height:48.00px;color:#222;font-weight:bold;transform:translate(-0.200px,-0.263px) scale(0.10000,0.10000);-webkit-text-stroke:1.0px currentColor;">Project Kick Off completed</div>
<div class="r" style="left:185.3px;top:13.10px;width:38.7px;height:9.3px;background:#e7e9ec;border-radius:2px;"></div>
<div class="t" style="left:203px;top:16px;font-size:39.60px;line-height:39.60px;color:#333;font-weight:bold;transform:translate(0.000px,-0.352px) scale(0.10000,0.10000) translateX(-50%);-webkit-text-stroke:1.0px currentColor;">Mandatory</div>
<svg class="r" style="left:214.10px;top:16.05px;" width="3.8" height="2.9" viewBox="0 0 3.8 2.9"><path d="M0.3 0.5 L1.9 1.9 L3.5 0.5" fill="none" stroke="#333" stroke-width="0.8"/></svg>
<div class="r" style="left:235.3px;top:13.10px;width:39px;height:9.3px;background:#e7e9ec;border-radius:2px;"></div>
<div class="t" style="left:253px;top:16px;font-size:40.00px;line-height:40.00px;color:#333;font-weight:bold;transform:translate(0.100px,-0.386px) scale(0.10000,0.10000) translateX(-50%);-webkit-text-stroke:1.0px currentColor;">In Progress</div>
<svg class="r" style="left:264.50px;top:16.05px;" width="3.8" height="2.9" viewBox="0 0 3.8 2.9"><path d="M0.3 0.5 L1.9 1.9 L3.5 0.5" fill="none" stroke="#333" stroke-width="0.8"/></svg>
<div class="r" style="left:286.4px;top:4.00px;width:100.3px;height:27.5px;background:#e8ebee;border:0.5px solid #d9dcdf;border-radius:1.5px;"></div>
<div class="t" style="left:291px;top:8px;font-size:44.00px;line-height:44.00px;color:#333;font-weight:bold;transform:translate(0.000px,-0.125px) scale(0.10000,0.10000);-webkit-text-stroke:1.0px currentColor;">Effective initiation, setting a solid</div>
<div class="t" style="left:291px;top:15px;font-size:44.00px;line-height:44.00px;color:#333;font-weight:bold;transform:translate(0.000px,-0.325px) scale(0.10000,0.10000);-webkit-text-stroke:1.0px currentColor;">foundation for 'Prince Henry at Little Bay'</div>
<div class="r" style="left:398.8px;top:4.00px;width:100.5px;height:27.5px;background:#fff;border:0.5px solid #e2dcdc;border-radius:1.5px;"></div>
<div class="t" style="left:404px;top:8px;font-size:43.70px;line-height:43.70px;color:#333;font-weight:bold;transform:translate(-0.100px,-0.099px) scale(0.10000,0.10000);-webkit-text-stroke:1.0px currentColor;">Consider a follow-up session to address</div>
<div class="t" style="left:404px;top:15px;font-size:43.70px;line-height:43.70px;color:#333;font-weight:bold;transform:translate(-0.100px,-0.299px) scale(0.10000,0.10000);-webkit-text-stroke:1.0px currentColor;">any unresolved questions or concerns.</div>
<div class="r" style="left:511.5px;top:12.90px;width:38.5px;height:9.8px;background:#48c284;border-radius:2px;"></div>
<div class="t" style="left:529px;top:16px;font-size:40.80px;line-height:40.80px;color:#fff;font-weight:bold;transform:translate(-0.200px,-0.454px) scale(0.10000,0.10000) translateX(-50%);-webkit-text-stroke:1.0px currentColor;">Green</div>
<svg class="r" style="left:540.30px;top:16.05px;" width="3.8" height="2.9" viewBox="0 0 3.8 2.9"><path d="M0.3 0.5 L1.9 1.9 L3.5 0.5" fill="none" stroke="#2a2a40" stroke-width="0.8"/></svg>
<div class="r" style="left:561.9px;top:4.00px;width:100.8px;height:27.5px;background:#fff;border:0.5px solid #e2dcdc;border-radius:1.5px;"></div>
<div class="t" style="left:566px;top:8px;font-size:43.70px;line-height:43.70px;color:#333;font-weight:bold;transform:translate(0.500px,-0.099px) scale(0.10000,0.10000);-webkit-text-stroke:1.0px currentColor;">The kickoff was efficiently executed,</div>
<div class="t" style="left:566px;top:15px;font-size:43.70px;line-height:43.70px;color:#333;font-weight:bold;transform:translate(0.500px,-0.299px) scale(0.10000,0.10000);-webkit-text-stroke:1.0px currentColor;">ensuring a clear understanding of project</div>
<div class="t" style="left:566px;top:22px;font-size:43.70px;line-height:43.70px;color:#333;font-weight:bold;transform:translate(0.500px,-0.499px) scale(0.10000,0.10000);-webkit-text-stroke:1.0px currentColor;">goals.</div>
<div class="t" style="left:50px;top:51px;font-size:46.00px;line-height:46.00px;color:#222;font-weight:bold;transform:translate(0.400px,0.206px) scale(0.10000,0.10000);-webkit-text-stroke:1.0px currentColor;">2</div>
<div class="t" style="left:67px;top:51px;font-size:48.00px;line-height:48.00px;color:#222;font-weight:bold;transform:translate(-0.200px,0.037px) scale(0.10000,0.10000);-webkit-text-stroke:1.0px currentColor;">Project Tasks Assigned</div>
<div class="r" style="left:185.3px;top:48.40px;width:38.7px;height:9.3px;background:#e7e9ec;border-radius:2px;"></div>
<div class="t" style="left:203px;top:51px;font-size:39.60px;line-height:39.60px;color:#333;font-weight:bold;transform:translate(-0.300px,-0.052px) scale(0.10000,0.10000) translateX(-50%);-webkit-text-stroke:1.0px currentColor;">Optional</div>
<svg class="r" style="left:214.10px;top:51.35px;" width="3.8" height="2.9" viewBox="0 0 3.8 2.9"><path d="M0.3 0.5 L1.9 1.9 L3.5 0.5" fill="none" stroke="#333" stroke-width="0.8"/></svg>
<div class="r" style="left:235.3px;top:48.40px;width:39px;height:9.3px;background:#e7e9ec;border-radius:2px;"></div>
<div class="t" style="left:253px;top:51px;font-size:40.00px;line-height:40.00px;color:#333;font-weight:bold;transform:translate(0.100px,-0.086px) scale(0.10000,0.10000) translateX(-50%);-webkit-text-stroke:1.0px currentColor;">In Progress</div>
<svg class="r" style="left:264.50px;top:51.35px;" width="3.8" height="2.9" viewBox="0 0 3.8 2.9"><path d="M0.3 0.5 L1.9 1.9 L3.5 0.5" fill="none" stroke="#333" stroke-width="0.8"/></svg>
<div class="r" style="left:286.4px;top:39.30px;width:100.3px;height:27.5px;background:#e8ebee;border:0.5px solid #d9dcdf;border-radius:1.5px;"></div>
<div class="t" style="left:291px;top:43px;font-size:44.00px;line-height:44.00px;color:#333;font-weight:bold;transform:translate(0.000px,0.175px) scale(0.10000,0.10000);-webkit-text-stroke:1.0px currentColor;">Good distribution of tasks, fostering team</div>
<div class="t" style="left:291px;top:50px;font-size:44.00px;line-height:44.00px;color:#333;font-weight:bold;transform:translate(0.000px,-0.025px) scale(0.10000,0.10000);-webkit-text-stroke:1.0px currentColor;">accountability in the project.</div>
<div class="r" style="left:398.8px;top:39.30px;width:100.5px;height:27.5px;background:#fff;border:0.5px solid #e2dcdc;border-radius:1.5px;"></div>
<div class="t" style="left:404px;top:43px;font-size:43.70px;line-height:43.70px;color:#333;font-weight:bold;transform:translate(-0.100px,0.201px) scale(0.10000,0.10000);-webkit-text-stroke:1.0px currentColor;">Regularly update task assignments to</div>
<div class="t" style="left:404px;top:50px;font-size:43.70px;line-height:43.70px;color:#333;font-weight:bold;transform:translate(-0.100px,0.001px) scale(0.10000,0.10000);-webkit-text-stroke:1.0px currentColor;">reflect progress and any changing</div>
<div class="t" style="left:404px;top:57px;font-size:43.70px;line-height:43.70px;color:#333;font-weight:bold;transform:translate(-0.100px,-0.199px) scale(0.10000,0.10000);-webkit-text-stroke:1.0px currentColor;">priorities.</div>
<div class="r" style="left:511.5px;top:48.20px;width:38.5px;height:9.8px;background:#fdbb2f;border-radius:2px;"></div>
<div class="t" style="left:529px;top:51px;font-size:40.80px;line-height:40.80px;color:#fff;font-weight:bold;transform:translate(-0.200px,-0.154px) scale(0.10000,0.10000) translateX(-50%);-webkit-text-stroke:1.0px currentColor;">Amber</div>
<svg class="r" style="left:540.30px;top:51.35px;" width="3.8" height="2.9" viewBox="0 0 3.8 2.9"><path d="M0.3 0.5 L1.9 1.9 L3.5 0.5" fill="none" stroke="#2a2a40" stroke-width="0.8"/></svg>
<div class="r" style="left:561.9px;top:39.30px;width:100.8px;height:27.5px;background:#fff;border:0.5px solid #e2dcdc;border-radius:1.5px;"></div>
<div class="t" style="left:566px;top:43px;font-size:43.70px;line-height:43.70px;color:#333;font-weight:bold;transform:translate(0.500px,0.201px) scale(0.10000,0.10000);-webkit-text-stroke:1.0px currentColor;">Tasks are well-distributed, aligning with</div>
<div class="t" style="left:566px;top:50px;font-size:43.70px;line-height:43.70px;color:#333;font-weight:bold;transform:translate(0.500px,0.001px) scale(0.10000,0.10000);-webkit-text-stroke:1.0px currentColor;">team members' strengths and expertise.</div>
<div class="t" style="left:50px;top:87px;font-size:46.00px;line-height:46.00px;color:#222;font-weight:bold;transform:translate(0.400px,-0.494px) scale(0.10000,0.10000);-webkit-text-stroke:1.0px currentColor;">3</div>
<div class="t" style="left:67px;top:86px;font-size:48.00px;line-height:48.00px;color:#222;font-weight:bold;transform:translate(-0.200px,0.337px) scale(0.10000,0.10000);-webkit-text-stroke:1.0px currentColor;">Milestones Tracking</div>
<div class="r" style="left:185.3px;top:83.70px;width:38.7px;height:9.3px;background:#e7e9ec;border-radius:2px;"></div>
<div class="t" style="left:203px;top:86px;font-size:39.60px;line-height:39.60px;color:#333;font-weight:bold;transform:translate(-0.300px,0.248px) scale(0.10000,0.10000) translateX(-50%);-webkit-text-stroke:1.0px currentColor;">Optional</div>
<svg class="r" style="left:214.10px;top:86.65px;" width="3.8" height="2.9" viewBox="0 0 3.8 2.9"><path d="M0.3 0.5 L1.9 1.9 L3.5 0.5" fill="none" stroke="#333" stroke-width="0.8"/></svg>
<div class="r" style="left:235.3px;top:83.70px;width:39px;height:9.3px;background:#e7e9ec;border-radius:2px;"></div>
<div class="t" style="left:253px;top:86px;font-size:40.00px;line-height:40.00px;color:#333;font-weight:bold;transform:translate(0.100px,0.214px) scale(0.10000,0.10000) translateX(-50%);-webkit-text-stroke:1.0px currentColor;">Not Started</div>
<svg class="r" style="left:264.50px;top:86.65px;" width="3.8" height="2.9" viewBox="0 0 3.8 2.9"><path d="M0.3 0.5 L1.9 1.9 L3.5 0.5" fill="none" stroke="#333" stroke-width="0.8"/></svg>
<div class="r" style="left:286.4px;top:74.60px;width:100.3px;height:27.5px;background:#e8ebee;border:0.5px solid #d9dcdf;border-radius:1.5px;"></div>
<div class="t" style="left:291px;top:78px;font-size:44.00px;line-height:44.00px;color:#333;font-weight:bold;transform:translate(0.000px,0.475px) scale(0.10000,0.10000);-webkit-text-stroke:1.0px currentColor;">Early stage, but crucial for monitoring</div>
<div class="t" style="left:291px;top:85px;font-size:44.00px;line-height:44.00px;color:#333;font-weight:bold;transform:translate(0.000px,0.275px) scale(0.10000,0.10000);-webkit-text-stroke:1.0px currentColor;">progress at 'Prince Henry at Little Bay'.</div>
<div class="r" style="left:398.8px;top:74.60px;width:100.5px;height:27.5px;background:#fff;border:0.5px solid #e2dcdc;border-radius:1.5px;"></div>
<div class="t" style="left:404px;top:79px;font-size:43.70px;line-height:43.70px;color:#333;font-weight:bold;transform:translate(-0.100px,-0.499px) scale(0.10000,0.10000);-webkit-text-stroke:1.0px currentColor;">&nbsp;Establish clear, measurable milestones to</div>
<div class="t" style="left:404px;top:85px;font-size:43.70px;line-height:43.70px;color:#333;font-weight:bold;transform:translate(-0.100px,0.301px) scale(0.10000,0.10000);-webkit-text-stroke:1.0px currentColor;">ensure timely completion of project</div>
<div class="t" style="left:404px;top:92px;font-size:43.70px;line-height:43.70px;color:#333;font-weight:bold;transform:translate(-0.100px,0.101px) scale(0.10000,0.10000);-webkit-text-stroke:1.0px currentColor;">phases.</div>
<div class="r" style="left:511.5px;top:83.50px;width:38.5px;height:9.8px;background:#e01e2b;border-radius:2px;"></div>
<div class="t" style="left:529px;top:86px;font-size:40.80px;line-height:40.80px;color:#fff;font-weight:bold;transform:translate(-0.200px,0.146px) scale(0.10000,0.10000) translateX(-50%);-webkit-text-stroke:1.0px currentColor;">Red</div>
<svg class="r" style="left:540.30px;top:86.65px;" width="3.8" height="2.9" viewBox="0 0 3.8 2.9"><path d="M0.3 0.5 L1.9 1.9 L3.5 0.5" fill="none" stroke="#2a2a40" stroke-width="0.8"/></svg>
<div class="r" style="left:561.9px;top:74.60px;width:100.8px;height:27.5px;background:#fff;border:0.5px solid #e2dcdc;border-radius:1.5px;"></div>
<div class="t" style="left:566px;top:79px;font-size:43.70px;line-height:43.70px;color:#333;font-weight:bold;transform:translate(0.500px,-0.499px) scale(0.10000,0.10000);-webkit-text-stroke:1.0px currentColor;">Currently in the preliminary phase, yet</div>
<div class="t" style="left:566px;top:85px;font-size:43.70px;line-height:43.70px;color:#333;font-weight:bold;transform:translate(0.500px,0.301px) scale(0.10000,0.10000);-webkit-text-stroke:1.0px currentColor;">essential for gauging project progress.</div>
<div class="t" style="left:50px;top:122px;font-size:46.00px;line-height:46.00px;color:#222;font-weight:bold;transform:translate(0.400px,-0.194px) scale(0.10000,0.10000);-webkit-text-stroke:1.0px currentColor;">4</div>
<div class="t" style="left:67px;top:122px;font-size:48.00px;line-height:48.00px;color:#222;font-weight:bold;transform:translate(-0.200px,-0.363px) scale(0.10000,0.10000);-webkit-text-stroke:1.0px currentColor;">Status Reporting in progress</div>
<div class="r" style="left:185.3px;top:119.00px;width:38.7px;height:9.3px;background:#e7e9ec;border-radius:2px;"></div>
<div class="t" style="left:203px;top:122px;font-size:39.60px;line-height:39.60px;color:#333;font-weight:bold;transform:translate(0.000px,-0.452px) scale(0.10000,0.10000) translateX(-50%);-webkit-text-stroke:1.0px currentColor;">Mandatory</div>
<svg class="r" style="left:214.10px;top:121.95px;" width="3.8" height="2.9" viewBox="0 0 3.8 2.9"><path d="M0.3 0.5 L1.9 1.9 L3.5 0.5" fill="none" stroke="#333" stroke-width="0.8"/></svg>
<div class="r" style="left:235.3px;top:119.00px;width:39px;height:9.3px;background:#e7e9ec;border-radius:2px;"></div>
<div class="t" style="left:253px;top:122px;font-size:40.00px;line-height:40.00px;color:#333;font-weight:bold;transform:translate(0.100px,-0.486px) scale(0.10000,0.10000) translateX(-50%);-webkit-text-stroke:1.0px currentColor;">Completed</div>
<svg class="r" style="left:264.50px;top:121.95px;" width="3.8" height="2.9" viewBox="0 0 3.8 2.9"><path d="M0.3 0.5 L1.9 1.9 L3.5 0.5" fill="none" stroke="#333" stroke-width="0.8"/></svg>
<div class="r" style="left:286.4px;top:109.90px;width:100.3px;height:27.5px;background:#e8ebee;border:0.5px solid #d9dcdf;border-radius:1.5px;"></div>
<div class="t" style="left:291px;top:114px;font-size:44.00px;line-height:44.00px;color:#333;font-weight:bold;transform:translate(0.000px,-0.225px) scale(0.10000,0.10000);-webkit-text-stroke:1.0px currentColor;">Timely completion reflects efficient project</div>
<div class="t" style="left:291px;top:121px;font-size:44.00px;line-height:44.00px;color:#333;font-weight:bold;transform:translate(0.000px,-0.425px) scale(0.10000,0.10000);-webkit-text-stroke:1.0px currentColor;">management and communication.</div>
<div class="r" style="left:398.8px;top:109.90px;width:100.5px;height:27.5px;background:#fff;border:0.5px solid #e2dcdc;border-radius:1.5px;"></div>
<div class="t" style="left:404px;top:114px;font-size:43.70px;line-height:43.70px;color:#333;font-weight:bold;transform:translate(-0.100px,-0.199px) scale(0.10000,0.10000);-webkit-text-stroke:1.0px currentColor;">Include more detailed analysis on</div>
<div class="t" style="left:404px;top:121px;font-size:43.70px;line-height:43.70px;color:#333;font-weight:bold;transform:translate(-0.100px,-0.399px) scale(0.10000,0.10000);-webkit-text-stroke:1.0px currentColor;">challenges and strategies for overcoming</div>
<div class="t" style="left:404px;top:127px;font-size:43.70px;line-height:43.70px;color:#333;font-weight:bold;transform:translate(-0.100px,0.401px) scale(0.10000,0.10000);-webkit-text-stroke:1.0px currentColor;">them.</div>
<div class="r" style="left:511.5px;top:118.80px;width:38.5px;height:9.8px;background:#48c284;border-radius:2px;"></div>
<div class="t" style="left:529px;top:121px;font-size:40.80px;line-height:40.80px;color:#fff;font-weight:bold;transform:translate(-0.200px,0.446px) scale(0.10000,0.10000) translateX(-50%);-webkit-text-stroke:1.0px currentColor;">Green</div>
<svg class="r" style="left:540.30px;top:121.95px;" width="3.8" height="2.9" viewBox="0 0 3.8 2.9"><path d="M0.3 0.5 L1.9 1.9 L3.5 0.5" fill="none" stroke="#2a2a40" stroke-width="0.8"/></svg>
<div class="r" style="left:561.9px;top:109.90px;width:100.8px;height:27.5px;background:#fff;border:0.5px solid #e2dcdc;border-radius:1.5px;"></div>
<div class="t" style="left:566px;top:114px;font-size:43.70px;line-height:43.70px;color:#333;font-weight:bold;transform:translate(0.500px,-0.199px) scale(0.10000,0.10000);-webkit-text-stroke:1.0px currentColor;">Comprehensive and timely status updates</div>
<div class="t" style="left:566px;top:121px;font-size:43.70px;line-height:43.70px;color:#333;font-weight:bold;transform:translate(0.500px,-0.399px) scale(0.10000,0.10000);-webkit-text-stroke:1.0px currentColor;">are being provided.</div>
<div class="t" style="left:50px;top:157px;font-size:46.00px;line-height:46.00px;color:#222;font-weight:bold;transform:translate(0.400px,0.106px) scale(0.10000,0.10000);-webkit-text-stroke:1.0px currentColor;">5</div>
<div class="t" style="left:67px;top:157px;font-size:48.00px;line-height:48.00px;color:#222;font-weight:bold;transform:translate(-0.200px,-0.063px) scale(0.10000,0.10000);-webkit-text-stroke:1.0px currentColor;">Steerco meetings established</div>
<div class="r" style="left:185.3px;top:154.30px;width:38.7px;height:9.3px;background:#e7e9ec;border-radius:2px;"></div>
<div class="t" style="left:203px;top:157px;font-size:39.60px;line-height:39.60px;color:#333;font-weight:bold;transform:translate(0.000px,-0.152px) scale(0.10000,0.10000) translateX(-50%);-webkit-text-stroke:1.0px currentColor;">Mandatory</div>
<svg class="r" style="left:214.10px;top:157.25px;" width="3.8" height="2.9" viewBox="0 0 3.8 2.9"><path d="M0.3 0.5 L1.9 1.9 L3.5 0.5" fill="none" stroke="#333" stroke-width="0.8"/></svg>
<div class="r" style="left:235.3px;top:154.30px;width:39px;height:9.3px;background:#e7e9ec;border-radius:2px;"></div>
<div class="t" style="left:253px;top:157px;font-size:40.00px;line-height:40.00px;color:#333;font-weight:bold;transform:translate(0.100px,-0.186px) scale(0.10000,0.10000) translateX(-50%);-webkit-text-stroke:1.0px currentColor;">Not Started</div>
<svg class="r" style="left:264.50px;top:157.25px;" width="3.8" height="2.9" viewBox="0 0 3.8 2.9"><path d="M0.3 0.5 L1.9 1.9 L3.5 0.5" fill="none" stroke="#333" stroke-width="0.8"/></svg>
<div class="r" style="left:286.4px;top:145.20px;width:100.3px;height:27.5px;background:#e8ebee;border:0.5px solid #d9dcdf;border-radius:1.5px;"></div>
<div class="t" style="left:291px;top:149px;font-size:44.00px;line-height:44.00px;color:#333;font-weight:bold;transform:translate(0.000px,0.075px) scale(0.10000,0.10000);-webkit-text-stroke:1.0px currentColor;">Essential for strategic oversight, yet to</div>
<div class="t" style="left:291px;top:156px;font-size:44.00px;line-height:44.00px;color:#333;font-weight:bold;transform:translate(0.000px,-0.125px) scale(0.10000,0.10000);-webkit-text-stroke:1.0px currentColor;">commence for 'Prince Henry at Little Bay'.</div>
<div class="r" style="left:398.8px;top:145.20px;width:100.5px;height:27.5px;background:#fff;border:0.5px solid #e2dcdc;border-radius:1.5px;"></div>
<div class="t" style="left:404px;top:149px;font-size:43.70px;line-height:43.70px;color:#333;font-weight:bold;transform:translate(-0.100px,0.101px) scale(0.10000,0.10000);-webkit-text-stroke:1.0px currentColor;">Schedule the first meeting promptly to set</div>
<div class="t" style="left:404px;top:156px;font-size:43.70px;line-height:43.70px;color:#333;font-weight:bold;transform:translate(-0.100px,-0.099px) scale(0.10000,0.10000);-webkit-text-stroke:1.0px currentColor;">the tone and direction for the project.</div>
<div class="r" style="left:511.5px;top:154.10px;width:38.5px;height:9.8px;background:#fdbb2f;border-radius:2px;"></div>
<div class="t" style="left:529px;top:157px;font-size:40.80px;line-height:40.80px;color:#fff;font-weight:bold;transform:translate(-0.200px,-0.254px) scale(0.10000,0.10000) translateX(-50%);-webkit-text-stroke:1.0px currentColor;">Amber</div>
<svg class="r" style="left:540.30px;top:157.25px;" width="3.8" height="2.9" viewBox="0 0 3.8 2.9"><path d="M0.3 0.5 L1.9 1.9 L3.5 0.5" fill="none" stroke="#2a2a40" stroke-width="0.8"/></svg>
<div class="r" style="left:561.9px;top:145.20px;width:100.8px;height:27.5px;background:#fff;border:0.5px solid #e2dcdc;border-radius:1.5px;"></div>
<div class="t" style="left:566px;top:149px;font-size:43.70px;line-height:43.70px;color:#333;font-weight:bold;transform:translate(0.500px,0.101px) scale(0.10000,0.10000);-webkit-text-stroke:1.0px currentColor;">Yet to start, but crucial for strategic</div>
<div class="t" style="left:566px;top:156px;font-size:43.70px;line-height:43.70px;color:#333;font-weight:bold;transform:translate(0.500px,-0.099px) scale(0.10000,0.10000);-webkit-text-stroke:1.0px currentColor;">guidance and decision-making.</div>
<div class="t" style="left:50px;top:192px;font-size:46.00px;line-height:46.00px;color:#222;font-weight:bold;transform:translate(0.400px,0.406px) scale(0.10000,0.10000);-webkit-text-stroke:1.0px currentColor;">6</div>
<div class="t" style="left:67px;top:192px;font-size:48.00px;line-height:48.00px;color:#222;font-weight:bold;transform:translate(-0.200px,0.237px) scale(0.10000,0.10000);-webkit-text-stroke:1.0px currentColor;">Team Meetings established</div>
<div class="r" style="left:185.3px;top:189.60px;width:38.7px;height:9.3px;background:#e7e9ec;border-radius:2px;"></div>
<div class="t" style="left:203px;top:192px;font-size:39.60px;line-height:39.60px;color:#333;font-weight:bold;transform:translate(0.000px,0.148px) scale(0.10000,0.10000) translateX(-50%);-webkit-text-stroke:1.0px currentColor;">Mandatory</div>
<svg class="r" style="left:214.10px;top:192.55px;" width="3.8" height="2.9" viewBox="0 0 3.8 2.9"><path d="M0.3 0.5 L1.9 1.9 L3.5 0.5" fill="none" stroke="#333" stroke-width="0.8"/></svg>
<div class="r" style="left:235.3px;top:189.60px;width:39px;height:9.3px;background:#e7e9ec;border-radius:2px;"></div>
<div class="t" style="left:253px;top:192px;font-size:40.00px;line-height:40.00px;color:#333;font-weight:bold;transform:translate(0.100px,0.114px) scale(0.10000,0.10000) translateX(-50%);-webkit-text-stroke:1.0px currentColor;">Not Started</div>
<svg class="r" style="left:264.50px;top:192.55px;" width="3.8" height="2.9" viewBox="0 0 3.8 2.9"><path d="M0.3 0.5 L1.9 1.9 L3.5 0.5" fill="none" stroke="#333" stroke-width="0.8"/></svg>
<div class="r" style="left:286.4px;top:180.50px;width:100.3px;height:27.5px;background:#e8ebee;border:0.5px solid #d9dcdf;border-radius:1.5px;"></div>
<div class="t" style="left:291px;top:184px;font-size:44.00px;line-height:44.00px;color:#333;font-weight:bold;transform:translate(0.000px,0.375px) scale(0.10000,0.10000);-webkit-text-stroke:1.0px currentColor;">Vital for team collaboration, needs urgent</div>
<div class="t" style="left:291px;top:191px;font-size:44.00px;line-height:44.00px;color:#333;font-weight:bold;transform:translate(0.000px,0.175px) scale(0.10000,0.10000);-webkit-text-stroke:1.0px currentColor;">initiation to maintain momentum.</div>
<div class="r" style="left:398.8px;top:180.50px;width:100.5px;height:27.5px;background:#fff;border:0.5px solid #e2dcdc;border-radius:1.5px;"></div>
<div class="t" style="left:404px;top:184px;font-size:43.70px;line-height:43.70px;color:#333;font-weight:bold;transform:translate(-0.100px,0.401px) scale(0.10000,0.10000);-webkit-text-stroke:1.0px currentColor;">Start regular meetings as soon as possible</div>
<div class="t" style="left:404px;top:191px;font-size:43.70px;line-height:43.70px;color:#333;font-weight:bold;transform:translate(-0.100px,0.201px) scale(0.10000,0.10000);-webkit-text-stroke:1.0px currentColor;">to enhance team cohesion and information</div>
<div class="t" style="left:404px;top:198px;font-size:43.70px;line-height:43.70px;color:#333;font-weight:bold;transform:translate(-0.100px,0.001px) scale(0.10000,0.10000);-webkit-text-stroke:1.0px currentColor;">flow.</div>
<div class="r" style="left:511.5px;top:189.40px;width:38.5px;height:9.8px;background:#48c284;border-radius:2px;"></div>
<div class="t" style="left:529px;top:192px;font-size:40.80px;line-height:40.80px;color:#fff;font-weight:bold;transform:translate(-0.200px,0.046px) scale(0.10000,0.10000) translateX(-50%);-webkit-text-stroke:1.0px currentColor;">Green</div>
<svg class="r" style="left:540.30px;top:192.55px;" width="3.8" height="2.9" viewBox="0 0 3.8 2.9"><path d="M0.3 0.5 L1.9 1.9 L3.5 0.5" fill="none" stroke="#2a2a40" stroke-width="0.8"/></svg>
<div class="r" style="left:561.9px;top:180.50px;width:100.8px;height:27.5px;background:#fff;border:0.5px solid #e2dcdc;border-radius:1.5px;"></div>
<div class="t" style="left:566px;top:184px;font-size:43.70px;line-height:43.70px;color:#333;font-weight:bold;transform:translate(0.500px,0.401px) scale(0.10000,0.10000);-webkit-text-stroke:1.0px currentColor;">&nbsp;Important for maintaining team</div>
<div class="t" style="left:566px;top:191px;font-size:43.70px;line-height:43.70px;color:#333;font-weight:bold;transform:translate(0.500px,0.201px) scale(0.10000,0.10000);-webkit-text-stroke:1.0px currentColor;">communication, but not yet initiated.</div>
<div class="t" style="left:50px;top:228px;font-size:46.00px;line-height:46.00px;color:#222;font-weight:bold;transform:translate(0.400px,-0.294px) scale(0.10000,0.10000);-webkit-text-stroke:1.0px currentColor;">7</div>
<div class="t" style="left:67px;top:228px;font-size:48.00px;line-height:48.00px;color:#222;font-weight:bold;transform:translate(-0.200px,-0.463px) scale(0.10000,0.10000);-webkit-text-stroke:1.0px currentColor;">Financial Tracking</div>
<div class="r" style="left:185.3px;top:224.90px;width:38.7px;height:9.3px;background:#e7e9ec;border-radius:2px;"></div>
<div class="t" style="left:203px;top:227px;font-size:39.60px;line-height:39.60px;color:#333;font-weight:bold;transform:translate(0.000px,0.448px) scale(0.10000,0.10000) translateX(-50%);-webkit-text-stroke:1.0px currentColor;">Mandatory</div>
<svg class="r" style="left:214.10px;top:227.85px;" width="3.8" height="2.9" viewBox="0 0 3.8 2.9"><path d="M0.3 0.5 L1.9 1.9 L3.5 0.5" fill="none" stroke="#333" stroke-width="0.8"/></svg>
<div class="r" style="left:235.3px;top:224.90px;width:39px;height:9.3px;background:#e7e9ec;border-radius:2px;"></div>
<div class="t" style="left:253px;top:227px;font-size:40.00px;line-height:40.00px;color:#333;font-weight:bold;transform:translate(0.100px,0.414px) scale(0.10000,0.10000) translateX(-50%);-webkit-text-stroke:1.0px currentColor;">In Progress</div>
<svg class="r" style="left:264.50px;top:227.85px;" width="3.8" height="2.9" viewBox="0 0 3.8 2.9"><path d="M0.3 0.5 L1.9 1.9 L3.5 0.5" fill="none" stroke="#333" stroke-width="0.8"/></svg>
<div class="r" style="left:286.4px;top:215.80px;width:100.3px;height:27.5px;background:#e8ebee;border:0.5px solid #d9dcdf;border-radius:1.5px;"></div>
<div class="t" style="left:291px;top:220px;font-size:44.00px;line-height:44.00px;color:#333;font-weight:bold;transform:translate(0.000px,-0.325px) scale(0.10000,0.10000);-webkit-text-stroke:1.0px currentColor;">Ongoing financial oversight is key to the</div>
<div class="t" style="left:291px;top:226px;font-size:44.00px;line-height:44.00px;color:#333;font-weight:bold;transform:translate(0.000px,0.475px) scale(0.10000,0.10000);-webkit-text-stroke:1.0px currentColor;">project's fiscal health.</div>
<div class="r" style="left:398.8px;top:215.80px;width:100.5px;height:27.5px;background:#fff;border:0.5px solid #e2dcdc;border-radius:1.5px;"></div>
<div class="t" style="left:404px;top:220px;font-size:43.70px;line-height:43.70px;color:#333;font-weight:bold;transform:translate(-0.100px,-0.299px) scale(0.10000,0.10000);-webkit-text-stroke:1.0px currentColor;">Regularly review and adjust the budget to</div>
<div class="t" style="left:404px;top:227px;font-size:43.70px;line-height:43.70px;color:#333;font-weight:bold;transform:translate(-0.100px,-0.499px) scale(0.10000,0.10000);-webkit-text-stroke:1.0px currentColor;">manage any unforeseen expenses.</div>
<div class="r" style="left:511.5px;top:224.70px;width:38.5px;height:9.8px;background:#48c284;border-radius:2px;"></div>
<div class="t" style="left:529px;top:227px;font-size:40.80px;line-height:40.80px;color:#fff;font-weight:bold;transform:translate(-0.200px,0.346px) scale(0.10000,0.10000) translateX(-50%);-webkit-text-stroke:1.0px currentColor;">Green</div>
<svg class="r" style="left:540.30px;top:227.85px;" width="3.8" height="2.9" viewBox="0 0 3.8 2.9"><path d="M0.3 0.5 L1.9 1.9 L3.5 0.5" fill="none" stroke="#2a2a40" stroke-width="0.8"/></svg>
<div class="r" style="left:561.9px;top:215.80px;width:100.8px;height:27.5px;background:#fff;border:0.5px solid #e2dcdc;border-radius:1.5px;"></div>
<div class="t" style="left:566px;top:220px;font-size:43.70px;line-height:43.70px;color:#333;font-weight:bold;transform:translate(0.500px,-0.299px) scale(0.10000,0.10000);-webkit-text-stroke:1.0px currentColor;">Ongoing financial tracking is in place,</div>
<div class="t" style="left:566px;top:227px;font-size:43.70px;line-height:43.70px;color:#333;font-weight:bold;transform:translate(0.500px,-0.499px) scale(0.10000,0.10000);-webkit-text-stroke:1.0px currentColor;">ensuring budget adherence.</div>
</div>
<svg class="r" style="left:13.00px;top:32.40px;" width="7" height="6" viewBox="0 0 7 6"><path d="M0.3 0.6 L6.7 0.6 M0.3 2.8 L6.7 2.8 M0.3 5 L6.7 5" stroke="#555" stroke-width="0.8"/></svg>
<svg class="r" style="left:13.50px;top:48.00px;" width="6.5" height="6.5" viewBox="0 0 6.5 6.5"><path d="M0.6 3 L3.25 0.6 L5.9 3 L5.9 6 L4 6 L4 4.2 L2.5 4.2 L2.5 6 L0.6 6 Z" fill="none" stroke="#6b6b6b" stroke-width="0.5"/></svg>
<svg class="r" style="left:13.40px;top:61.20px;" width="6.5" height="6.5" viewBox="0 0 6.5 6.5"><circle cx="3.25" cy="3.25" r="2.7" fill="none" stroke="#6b6b6b" stroke-width="0.55"/><path d="M3.25 1.6 L3.25 3.4 L4.4 4.2" fill="none" stroke="#6b6b6b" stroke-width="0.5"/></svg>
<svg class="r" style="left:13.40px;top:74.80px;" width="6.5" height="6.5" viewBox="0 0 6.5 6.5"><path d="M0.5 6 L2.5 4 M1.6 2.9 L3.6 4.9 M2.4 2.4 L4 0.8 L5.7 2.5 L4.1 4.1 Z" fill="none" stroke="#6b6b6b" stroke-width="0.5"/></svg>
<div class="r" style="left:9.00px;top:86.80px;width:15.30px;height:0.50px;background:#dedede;"></div>
<svg class="r" style="left:13.90px;top:89.90px;" width="5.4" height="5.4" viewBox="0 0 6 6"><path d="M0.4 2.8 L3 0.3 L5.6 2.8 L5.6 5.7 L3.8 5.7 L3.8 4.2 L2.2 4.2 L2.2 5.7 L0.4 5.7 Z" fill="#34346f"/></svg>
<svg class="r" style="left:13.90px;top:103.80px;" width="5.4" height="5.4" viewBox="0 0 6 6"><path d="M0.4 2.8 L3 0.3 L5.6 2.8 L5.6 5.7 L3.8 5.7 L3.8 4.2 L2.2 4.2 L2.2 5.7 L0.4 5.7 Z" fill="#34346f"/></svg>
<svg class="r" style="left:13.90px;top:117.70px;" width="5.4" height="5.4" viewBox="0 0 6 6"><path d="M0.3 0.8 L1.4 0.8 M2.2 0.8 L5.7 0.8 M0.3 3 L1.4 3 M2.2 3 L5.7 3 M0.3 5.2 L1.4 5.2 M2.2 5.2 L5.7 5.2" stroke="#34346f" stroke-width="1.1"/></svg>
<svg class="r" style="left:13.90px;top:131.70px;" width="5.4" height="5.4" viewBox="0 0 6 6"><path d="M0.3 0.8 L2.3 0.8 L3 1.6 L5.7 1.6 L5.7 5.4 L0.3 5.4 Z" fill="#34346f"/><rect x="1.5" y="3" width="3" height="0.8" fill="#fff" opacity="0.6"/></svg>
<svg class="r" style="left:13.90px;top:145.60px;" width="5.4" height="5.4" viewBox="0 0 6 6"><path d="M3 0.2 L5.6 1.6 L5.6 4.4 L3 5.8 L0.4 4.4 L0.4 1.6 Z" fill="#34346f"/><path d="M0.6 3 L5.4 3" stroke="#fff" stroke-width="0.4" opacity="0.6"/></svg>
<svg class="r" style="left:13.90px;top:159.70px;" width="5.4" height="5.4" viewBox="0 0 6 6"><rect x="0.3" y="0.3" width="5.4" height="5.4" fill="#34346f"/><rect x="1.2" y="1.3" width="1.5" height="1.5" fill="#fff" opacity="0.7"/><rect x="3.2" y="3" width="1.5" height="1.5" fill="#c33" opacity="0.9"/></svg>
<svg class="r" style="left:13.90px;top:173.30px;" width="5.4" height="5.4" viewBox="0 0 6 6"><path d="M0.4 2.4 L1.2 0.6 L4.8 0.6 L5.6 2.4 L5.6 5.5 L0.4 5.5 Z" fill="#34346f"/><path d="M1 3 L2.2 3 L2.6 3.8 L3.4 3.8 L3.8 3 L5 3" fill="none" stroke="#fff" stroke-width="0.4" opacity="0.7"/></svg>
<svg class="r" style="left:13.90px;top:187.30px;" width="5.4" height="5.4" viewBox="0 0 6 6"><path d="M0.3 0.8 L2.3 0.8 L3 1.6 L5.7 1.6 L5.7 5.4 L0.3 5.4 Z" fill="#34346f"/><rect x="1.5" y="3" width="3" height="0.8" fill="#fff" opacity="0.6"/></svg>
<svg class="r" style="left:13.90px;top:201.60px;" width="5.4" height="5.4" viewBox="0 0 6 6"><path d="M0.6 0.6 L5.4 0.6 M0.6 2.2 L5.4 2.2 M0.6 3.8 L5.4 3.8 M0.6 5.4 L5.4 5.4" stroke="#34346f" stroke-width="1.0"/><path d="M3 0 L3 6" stroke="#eee" stroke-width="0.4"/></svg>
<svg class="r" style="left:13.90px;top:215.30px;" width="5.4" height="5.4" viewBox="0 0 6 6"><path d="M2.6 1 L5.6 1 M0.4 3 L4.4 3 M1.6 5 L5.0 5" stroke="#34346f" stroke-width="1.0"/></svg>
<svg class="r" style="left:13.90px;top:229.00px;" width="5.4" height="5.4" viewBox="0 0 6 6"><circle cx="3" cy="3" r="2.5" fill="none" stroke="#34346f" stroke-width="0.7" opacity="0.8"/><path d="M3 0.5 L3 5.5 M0.5 3 L5.5 3" stroke="#34346f" stroke-width="0.5" opacity="0.7"/></svg>
<svg class="r" style="left:13.90px;top:243.70px;" width="5.4" height="5.4" viewBox="0 0 6 6"><rect x="0.4" y="0.8" width="5.2" height="4.8" rx="0.6" fill="#34346f"/><rect x="1.2" y="2.4" width="3.6" height="0.8" fill="#fff" opacity="0.6"/></svg>
<svg class="r" style="left:13.90px;top:257.60px;" width="5.4" height="5.4" viewBox="0 0 6 6"><path d="M0.3 0.8 L3.8 0.8 L3.8 3.2 L1.4 3.2 L0.3 4 Z" fill="#34346f"/><path d="M2.2 2.6 L5.7 2.6 L5.7 5 L5.7 5.6 L4.8 5 L2.2 5 Z" fill="#34346f"/></svg>
<svg class="r" style="left:13.90px;top:271.30px;" width="5.4" height="5.4" viewBox="0 0 6 6"><rect x="0.3" y="0.3" width="4.6" height="5.4" fill="#34346f"/><path d="M3 5.6 L5.7 2.9" stroke="#34346f" stroke-width="1.0"/><path d="M1 1.6 L3.6 1.6 M1 2.8 L2.8 2.8" stroke="#fff" stroke-width="0.4" opacity="0.7"/></svg>
<svg class="r" style="left:13.90px;top:285.30px;" width="5.4" height="5.4" viewBox="0 0 6 6"><path d="M3 0.3 L3 5.7 M0.6 1.6 L5.4 4.4 M0.6 4.4 L5.4 1.6" stroke="#34346f" stroke-width="0.6" opacity="0.75"/></svg>
<svg class="r" style="left:13.90px;top:298.90px;" width="5.4" height="5.4" viewBox="0 0 6 6"><rect x="0.5" y="0.3" width="5" height="5.4" fill="#34346f"/><path d="M1.4 1.6 L4.6 4.6 M4.6 1.6 L1.4 4.6" stroke="#fff" stroke-width="0.5" opacity="0.6"/></svg>
<svg class="r" style="left:13.90px;top:313.00px;" width="5.4" height="5.4" viewBox="0 0 6 6"><rect x="0.3" y="0.3" width="5.4" height="5.4" fill="#34346f"/><path d="M1.2 4.4 L2.6 2.2 L3.6 3.4 L4.8 1.6" fill="none" stroke="#fff" stroke-width="0.5" opacity="0.7"/></svg>
<svg class="r" style="left:13.90px;top:326.90px;" width="5.4" height="5.4" viewBox="0 0 6 6"><circle cx="3" cy="3" r="2.75" fill="#34346f"/><path d="M3 1.1 L3 4.9 M1.1 3 L4.9 3" stroke="#efefef" stroke-width="1.1"/></svg>
<svg class="r" style="left:13.90px;top:341.00px;" width="5.4" height="5.4" viewBox="0 0 6 6"><circle cx="3" cy="3" r="2.75" fill="#34346f"/><path d="M3 1.1 L3 4.9 M1.1 3 L4.9 3" stroke="#efefef" stroke-width="1.1"/></svg>
<svg class="r" style="left:13.90px;top:354.90px;" width="5.4" height="5.4" viewBox="0 0 6 6"><circle cx="3" cy="3" r="2.75" fill="#34346f"/><path d="M3 1.1 L3 4.9 M1.1 3 L4.9 3" stroke="#efefef" stroke-width="1.1"/></svg>
<svg class="r" style="left:13.90px;top:368.60px;" width="5.4" height="5.4" viewBox="0 0 6 6"><circle cx="3" cy="3" r="2.75" fill="#34346f"/><path d="M3 1.1 L3 4.9 M1.1 3 L4.9 3" stroke="#efefef" stroke-width="1.1"/></svg>
<svg class="r" style="left:13.90px;top:382.60px;" width="5.4" height="5.4" viewBox="0 0 6 6"><circle cx="3" cy="3" r="2.75" fill="#34346f"/><path d="M3 1.1 L3 4.9 M1.1 3 L4.9 3" stroke="#efefef" stroke-width="1.1"/></svg>
<div class="r" style="left:9.00px;top:196.45px;width:15.30px;height:0.50px;background:#dedede;"></div>
<div class="r" style="left:9.00px;top:238.45px;width:15.30px;height:0.50px;background:#dedede;"></div>
<div class="r" style="left:9.00px;top:322.15px;width:15.30px;height:0.50px;background:#dedede;"></div>
<div class="r" style="left:9.00px;top:392.05px;width:15.30px;height:0.50px;background:#dedede;"></div>
<div class="r" style="left:9.00px;top:424.15px;width:15.30px;height:0.50px;background:#dedede;"></div>
<div class="r" style="left:9.00px;top:130.00px;width:1.70px;height:8.40px;background:#2f7bf0;border-radius:0.8px;"></div>
<div class="r" style="left:10.8px;top:427.7px;width:10.4px;height:10.9px;background:#2a6db3;border-radius:1.2px;"></div>
<div class="t" style="left:16px;top:431px;font-size:46.00px;line-height:46.00px;color:#d6e6f7;font-weight:bold;transform:translate(0.200px,0.406px) scale(0.10000,0.10000) translateX(-50%);-webkit-text-stroke:1.0px currentColor;">P</div>
</body></html>
